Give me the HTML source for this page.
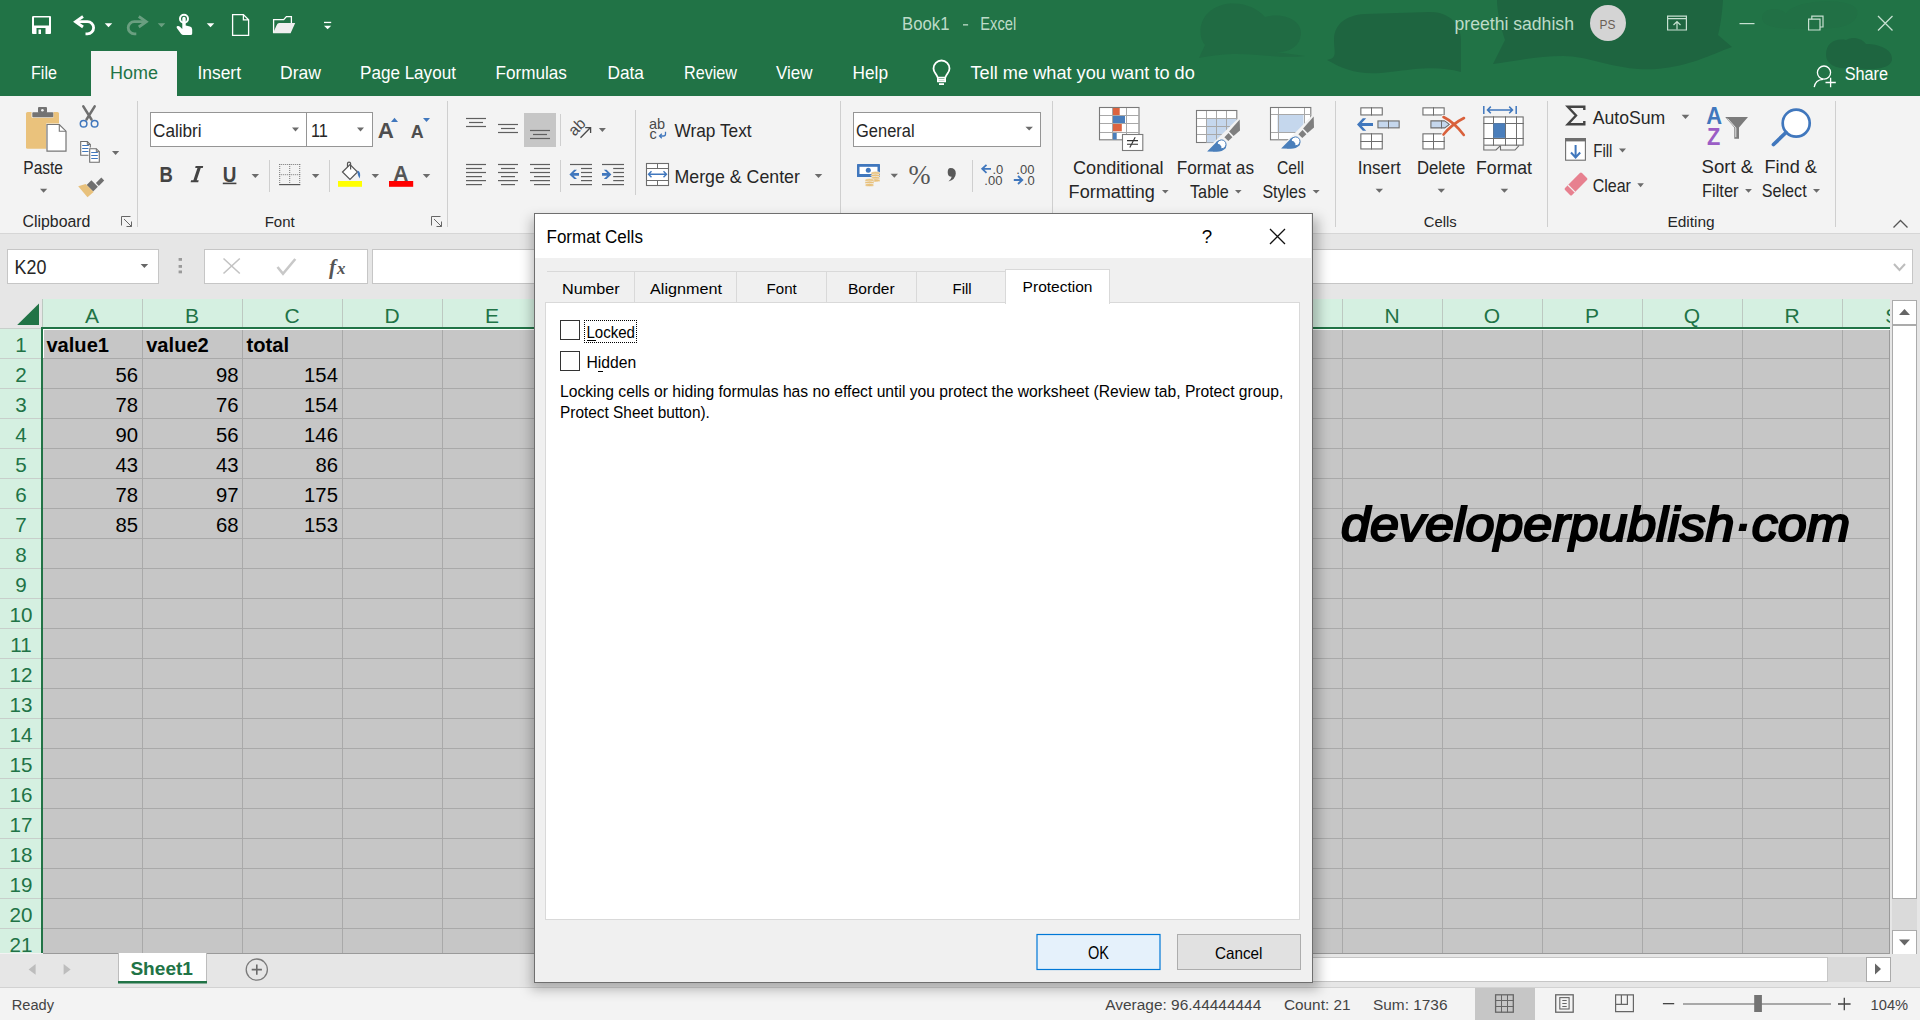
<!DOCTYPE html>
<html><head><meta charset="utf-8"><title>Excel</title>
<style>html,body{margin:0;padding:0;width:1920px;height:1020px;overflow:hidden;background:#f3f3f3}
svg{display:block;font-family:"Liberation Sans",sans-serif}</style></head>
<body><svg width="1920" height="1020" viewBox="0 0 1920 1020">
<rect x="0" y="0" width="1920" height="96" fill="#217346" />
<path d="M1199 58 L1205 45 C1197 36 1198 12 1222 5 C1240 0 1258 8 1265 17 C1283 12 1302 20 1301 34 C1300 47 1288 53 1276 52 L1305 56 C1270 60 1245 48 1199 58 Z" fill="#206b43" />
<path d="M1327 60 C1338 58 1334 52 1334 40 C1334 25 1345 15 1365 14 L1430 12 C1450 12 1461 25 1461 40 L1461 72 C1440 66 1420 68 1390 72 C1360 76 1345 70 1327 60 Z" fill="#1e6540" />
<path d="M1493 64 L1505 40 C1500 25 1497 10 1497 0 H1723 C1722 15 1720 28 1718 35 L1732 47 C1710 55 1690 66 1657 69 C1620 72 1590 56 1563 56 C1535 56 1510 62 1493 64 Z" fill="#1e6540" />
<path d="M1826 55 C1826 42 1836 38 1846 40 C1852 36 1862 38 1866 44 C1880 44 1893 50 1892 60 C1890 70 1870 70 1855 68 C1840 70 1826 66 1826 55 Z" fill="#1e6540" />
<path d="M1762 18 C1762 8 1780 6 1786 14 C1792 0 1850 -4 1857 10 C1860 24 1840 30 1815 28 C1795 30 1762 30 1762 18 Z" fill="#217045" />
<rect x="91" y="51" width="86" height="45" fill="#f3f3f3" />
<path d="M33.5 16 H50 Q51 16 51 17 V33 Q51 34 50 34 H33 Q32 34 32 33 V17 Q32 16 33.5 16 Z" fill="#ffffff" />
<rect x="34" y="17.5" width="15" height="8" fill="#217346" />
<rect x="36.5" y="28" width="9" height="6" fill="#217346" />
<rect x="38.5" y="29.5" width="2.5" height="4.5" fill="#ffffff" />
<path d="M83 16.5 L75.5 21.7 L83 27" fill="none" stroke="#ffffff" stroke-width="2.8" stroke-linejoin="miter" stroke-linecap="butt"/>
<path d="M76 21.7 H87.5 A6.1 6.1 0 0 1 87.5 33.9 H85.5" fill="none" stroke="#ffffff" stroke-width="2.8" />
<path d="M104.75 23.2h7.5l-3.75 4z" fill="#ffffff"/>
<path d="M138.8 16.5 L146.3 21.7 L138.8 27" fill="none" stroke="#6a9f80" stroke-width="2.8" />
<path d="M145.8 21.7 H134.3 A6.1 6.1 0 0 0 134.3 33.9 H136.3" fill="none" stroke="#6a9f80" stroke-width="2.8" />
<path d="M157.75 23.2h7.5l-3.75 4z" fill="#6a9f80"/>
<circle cx="184" cy="18.8" r="4" fill="none" stroke="#ffffff" stroke-width="2"/>
<path d="M182.3 18.5 Q182.3 16.8 184 16.8 Q185.7 16.8 185.7 18.5 V25.5 L190 26.5 Q192.2 27 192.2 29.5 V33.5 Q192.2 35 190.5 35 H183.5 Q182 35 181 33.8 L176.8 28 Q176 26.5 177.5 26 Q178.8 25.6 180 26.8 L182.3 29 Z" fill="#ffffff" />
<path d="M206.75 23.2h7.5l-3.75 4z" fill="#ffffff"/>
<path d="M232.6 14.6 H243.4 L248.6 19.8 V35.4 H232.6 Z M243.4 14.6 V19.8 H248.6" fill="none" stroke="#ffffff" stroke-width="1.3" />
<path d="M273.6 33 V19.6 H283.7 L286.4 16.6 H291.4 V23.5" fill="none" stroke="#ffffff" stroke-width="1.3" />
<path d="M279 23 H295.2 L290.6 33.2 H273 L276.5 25.5 Q277.2 23 279 23 Z" fill="#efefef" />
<rect x="324" y="21.8" width="7.2" height="1.3" fill="#ffffff" />
<path d="M324 25.8 H331.2 L327.6 29.3 Z" fill="#ffffff" />
<text transform="translate(31 79.3) scale(0.8825 1)" x="-0.0" y="0" font-size="18.3" fill="#ffffff" >File</text>
<text transform="translate(197.5 79.3) scale(0.9508 1)" x="-0.0" y="0" font-size="18.3" fill="#ffffff" >Insert</text>
<text transform="translate(280 79.3) scale(0.9595 1)" x="-0.0" y="0" font-size="18.3" fill="#ffffff" >Draw</text>
<text transform="translate(360 79.3) scale(0.9343 1)" x="-0.0" y="0" font-size="18.3" fill="#ffffff" >Page Layout</text>
<text transform="translate(495.5 79.3) scale(0.937 1)" x="-0.0" y="0" font-size="18.3" fill="#ffffff" >Formulas</text>
<text transform="translate(607.5 79.3) scale(0.943 1)" x="-0.0" y="0" font-size="18.3" fill="#ffffff" >Data</text>
<text transform="translate(684 79.3) scale(0.883 1)" x="-0.0" y="0" font-size="18.3" fill="#ffffff" >Review</text>
<text transform="translate(776 79.3) scale(0.9277 1)" x="-0.0" y="0" font-size="18.3" fill="#ffffff" >View</text>
<text transform="translate(852.5 79.3) scale(0.944 1)" x="-0.0" y="0" font-size="18.3" fill="#ffffff" >Help</text>
<text transform="translate(110 79.3) scale(0.9824 1)" x="-0.0" y="0" font-size="18.3" fill="#217346" >Home</text>
<path d="M937.7 77.6 C936.5 73.5 933.5 72.5 933.5 68.5 A8 8 0 1 1 949.5 68.5 C949.5 72.5 946.5 73.5 945.3 77.6 Z" fill="none" stroke="#ffffff" stroke-width="1.8" />
<path d="M937.8 77.6 V81.5 H945.2 V77.6 M938 79.8 H945" fill="none" stroke="#ffffff" stroke-width="1.6" />
<rect x="939" y="83.2" width="5" height="1.8" fill="#ffffff" />
<text transform="translate(970.5 79.3) scale(0.9941 1)" x="-0.0" y="0" font-size="18.3" fill="#ffffff" >Tell me what you want to do</text>
<text transform="translate(902.1 30) scale(0.9289 1)" x="-0.0" y="0" font-size="18" fill="#bddbc8" >Book1</text>
<rect x="963" y="24.2" width="5.1" height="1.3" fill="#bddbc8" />
<text transform="translate(980.3 30) scale(0.8157 1)" x="-0.0" y="0" font-size="18" fill="#bddbc8" >Excel</text>
<text transform="translate(1454.5 30) scale(0.9792 1)" x="-0.0" y="0" font-size="18" fill="#bddbc8" >preethi sadhish</text>
<circle cx="1608" cy="23" r="18" fill="#d4d4d4"/>
<text x="1599.5" y="28.8" font-size="11.91" fill="#6a5e55" >PS</text>
<path d="M1667.6 16.2 H1686.4 V30 H1667.6 Z M1667.6 18.6 H1686.4" fill="none" stroke="#c7e0d1" stroke-width="1.2" />
<path d="M1677 29.5 V21.5 M1673.5 25 L1677 21.5 L1680.5 25" fill="none" stroke="#c7e0d1" stroke-width="1.2" />
<rect x="1739.5" y="23" width="15" height="1.2" fill="#c7e0d1" />
<path d="M1808.6 19.2 H1820 V30 H1808.6 Z" fill="none" stroke="#c7e0d1" stroke-width="1.2" />
<path d="M1811.8 19.2 V16.2 H1823 V27 H1820" fill="none" stroke="#c7e0d1" stroke-width="1.2" />
<path d="M1878 16 L1892.5 30.5 M1892.5 16 L1878 30.5" fill="none" stroke="#c7e0d1" stroke-width="1.3" />
<circle cx="1824" cy="72.6" r="6.6" fill="none" stroke="#ffffff" stroke-width="1.3"/>
<path d="M1814.2 87.2 C1815 82 1818.5 79.5 1823 79.3" fill="none" stroke="#ffffff" stroke-width="1.3" />
<path d="M1830.6 77.8 V87.2 M1825.5 82.5 H1835.8" fill="none" stroke="#ffffff" stroke-width="1.3" />
<text transform="translate(1844.7 79.7) scale(0.8882 1)" x="-0.0" y="0" font-size="18.3" fill="#ffffff" >Share</text>
<rect x="0" y="96" width="1920" height="137" fill="#f3f3f3" />
<rect x="0" y="233" width="1920" height="1" fill="#d6d6d6"/>
<rect x="137" y="101" width="1" height="126" fill="#cfcfcf"/>
<rect x="447" y="101" width="1" height="126" fill="#cfcfcf"/>
<rect x="840" y="101" width="1" height="126" fill="#cfcfcf"/>
<rect x="1052" y="101" width="1" height="126" fill="#cfcfcf"/>
<rect x="1335" y="101" width="1" height="126" fill="#cfcfcf"/>
<rect x="1547" y="101" width="1" height="126" fill="#cfcfcf"/>
<rect x="1835" y="101" width="1" height="126" fill="#cfcfcf"/>
<text x="22.5" y="226.8" font-size="15.89" fill="#262626" >Clipboard</text>
<text x="264.7" y="226.8" font-size="15.0" fill="#262626" >Font</text>
<text x="1423.7" y="226.8" font-size="14.83" fill="#262626" >Cells</text>
<text x="1667.4" y="226.8" font-size="15.49" fill="#262626" >Editing</text>
<path d="M121.5 225.5 V216.5 H130.5" fill="none" stroke="#666" stroke-width="1" />
<path d="M124 219 L131.5 226.5 M131.5 221.5 V226.5 H126.5" fill="none" stroke="#666" stroke-width="1" />
<path d="M431.5 225.5 V216.5 H440.5" fill="none" stroke="#666" stroke-width="1" />
<path d="M434 219 L441.5 226.5 M441.5 221.5 V226.5 H436.5" fill="none" stroke="#666" stroke-width="1" />
<path d="M27.5 112 H57.5 Q59 112 59 113.5 V147.3 Q59 148.8 57.5 148.8 H27.5 Q26 148.8 26 147.3 V113.5 Q26 112 27.5 112 Z" fill="#eac27c" />
<rect x="31.5" y="111.8" width="22" height="6" fill="#f3f3f3" rx="1"/>
<rect x="32.3" y="112.3" width="21" height="5" fill="#737373" rx="0.8"/>
<rect x="38" y="107" width="9" height="6" fill="#737373" rx="1"/>
<circle cx="42.4" cy="110.3" r="1.3" fill="#f3f3f3"/>
<path d="M46.2 123.5 H59.3 L66.6 130.8 V152 H46.2 Z" fill="#f3f3f3" />
<path d="M47 124.5 H59.3 L66 131.2 V151.2 H47 Z" fill="#ffffff" stroke="#767676" stroke-width="1.2" />
<path d="M59.3 124.5 V131.2 H66" fill="none" stroke="#767676" stroke-width="1.1" />
<text transform="translate(23.3 173.7) scale(0.8681 1)" x="-0.0" y="0" font-size="17.9" fill="#262626" >Paste</text>
<path d="M40.0 188.8h7.2l-3.6 4z" fill="#6b6b6b"/>
<path d="M83.3 106.4 L91.5 119.5 M94.7 106.4 L86.5 119.5" fill="none" stroke="#6f6f6f" stroke-width="2.5" stroke-linecap="round"/>
<circle cx="83.6" cy="123.8" r="3.3" fill="none" stroke="#4077bd" stroke-width="1.5"/>
<circle cx="94.6" cy="123.8" r="3.3" fill="none" stroke="#4077bd" stroke-width="1.5"/>
<path d="M80.7 141.5 H87.3 L90.3 144.5 V155.3 H80.7 Z" fill="#fff" stroke="#6e6e6e" stroke-width="1.1" />
<path d="M87.3 141.5 V144.5 H90.3" fill="none" stroke="#6e6e6e" stroke-width="1" />
<rect x="82.2" y="145" width="6.599999999999994" height="1" fill="#4077bd"/>
<rect x="82.2" y="148" width="6.599999999999994" height="1" fill="#4077bd"/>
<rect x="82.2" y="151" width="6.599999999999994" height="1" fill="#4077bd"/>
<rect x="88.5" y="147.5" width="12" height="16" fill="#f3f3f3" />
<path d="M89.7 148.7 H96.3 L99.3 151.7 V162.3 H89.7 Z" fill="#fff" stroke="#6e6e6e" stroke-width="1.1" />
<path d="M96.3 148.7 V151.7 H99.3" fill="none" stroke="#6e6e6e" stroke-width="1" />
<rect x="91.2" y="152" width="6.599999999999994" height="1" fill="#4077bd"/>
<rect x="91.2" y="155" width="6.599999999999994" height="1" fill="#4077bd"/>
<rect x="91.2" y="158" width="6.599999999999994" height="1" fill="#4077bd"/>
<path d="M112.0 151h7.2l-3.6 4z" fill="#6b6b6b"/>
<path d="M101.3 177.6 L104.2 180.5 L98.8 185.9 L95.9 183 Z" fill="#6f6f6f" />
<path d="M93.1 191.5 L86.6 185 L91.4 180.2 L97.9 186.7 Z" fill="#6f6f6f" />
<path d="M78.2 186.3 L85.6 183.9 L93.6 191.9 L87.5 197.2 Z" fill="#e8c17c" />
<rect x="150.5" y="112.5" width="222" height="34" fill="#fff" stroke="#959595" stroke-width="1"/>
<rect x="306" y="112" width="1" height="34" fill="#959595"/>
<text transform="translate(153 137) scale(0.9597 1)" x="-0.0" y="0" font-size="17.9" fill="#262626" >Calibri</text>
<path d="M292.0 127.5h7l-3.5 4z" fill="#6b6b6b"/>
<text transform="translate(311 137) scale(0.9132 1)" x="-0.0" y="0" font-size="17.9" fill="#262626" >11</text>
<path d="M357.0 127.5h7l-3.5 4z" fill="#6b6b6b"/>
<text transform="translate(377.8 137.7) scale(0.9938 1)" x="-0.0" y="0" font-size="22.5" fill="#4e4e4e" font-weight="bold" >A</text>
<path d="M391 121.9 L394.5 117.7 L398 121.9 Z" fill="#4077bd" />
<text transform="translate(410.8 137.7) scale(0.953 1)" x="-0.0" y="0" font-size="18.8" fill="#4e4e4e" font-weight="bold" >A</text>
<path d="M423 118 H430 L426.5 122 Z" fill="#4077bd" />
<text transform="translate(159.4 182.2) scale(0.821 1)" x="-0.0" y="0" font-size="22.5" fill="#434343" font-weight="bold" >B</text>
<path d="M195.6 165.9 H203.2 L202.8 167.9 H195.2 Z M197.6 167.5 H200.9 L196.6 180.6 H193.3 Z M191.1 180.3 H198.7 L198.2 182.3 H190.6 Z" fill="#434343" />
<text transform="translate(222.8 181.9) scale(0.8786 1)" x="-0.0" y="0" font-size="21.5" fill="#434343" font-weight="bold" >U</text>
<rect x="222.8" y="182.6" width="13.6" height="1.6" fill="#434343" />
<path d="M251.55 174h7.5l-3.75 4z" fill="#6b6b6b"/>
<rect x="269" y="160" width="1" height="32" fill="#cfcfcf"/>
<g fill="#777">
<rect x="279.2" y="164" width="1" height="1" fill="#777" />
<rect x="279.2" y="174.2" width="1" height="1" fill="#777" />
<rect x="279.2" y="164" width="1" height="1" fill="#777" />
<rect x="289.2" y="164" width="1" height="1" fill="#777" />
<rect x="299.2" y="164" width="1" height="1" fill="#777" />
<rect x="281.2" y="164" width="1" height="1" fill="#777" />
<rect x="281.2" y="174.2" width="1" height="1" fill="#777" />
<rect x="279.2" y="166" width="1" height="1" fill="#777" />
<rect x="289.2" y="166" width="1" height="1" fill="#777" />
<rect x="299.2" y="166" width="1" height="1" fill="#777" />
<rect x="283.2" y="164" width="1" height="1" fill="#777" />
<rect x="283.2" y="174.2" width="1" height="1" fill="#777" />
<rect x="279.2" y="168" width="1" height="1" fill="#777" />
<rect x="289.2" y="168" width="1" height="1" fill="#777" />
<rect x="299.2" y="168" width="1" height="1" fill="#777" />
<rect x="285.2" y="164" width="1" height="1" fill="#777" />
<rect x="285.2" y="174.2" width="1" height="1" fill="#777" />
<rect x="279.2" y="170" width="1" height="1" fill="#777" />
<rect x="289.2" y="170" width="1" height="1" fill="#777" />
<rect x="299.2" y="170" width="1" height="1" fill="#777" />
<rect x="287.2" y="164" width="1" height="1" fill="#777" />
<rect x="287.2" y="174.2" width="1" height="1" fill="#777" />
<rect x="279.2" y="172" width="1" height="1" fill="#777" />
<rect x="289.2" y="172" width="1" height="1" fill="#777" />
<rect x="299.2" y="172" width="1" height="1" fill="#777" />
<rect x="289.2" y="164" width="1" height="1" fill="#777" />
<rect x="289.2" y="174.2" width="1" height="1" fill="#777" />
<rect x="279.2" y="174" width="1" height="1" fill="#777" />
<rect x="289.2" y="174" width="1" height="1" fill="#777" />
<rect x="299.2" y="174" width="1" height="1" fill="#777" />
<rect x="291.2" y="164" width="1" height="1" fill="#777" />
<rect x="291.2" y="174.2" width="1" height="1" fill="#777" />
<rect x="279.2" y="176" width="1" height="1" fill="#777" />
<rect x="289.2" y="176" width="1" height="1" fill="#777" />
<rect x="299.2" y="176" width="1" height="1" fill="#777" />
<rect x="293.2" y="164" width="1" height="1" fill="#777" />
<rect x="293.2" y="174.2" width="1" height="1" fill="#777" />
<rect x="279.2" y="178" width="1" height="1" fill="#777" />
<rect x="289.2" y="178" width="1" height="1" fill="#777" />
<rect x="299.2" y="178" width="1" height="1" fill="#777" />
<rect x="295.2" y="164" width="1" height="1" fill="#777" />
<rect x="295.2" y="174.2" width="1" height="1" fill="#777" />
<rect x="279.2" y="180" width="1" height="1" fill="#777" />
<rect x="289.2" y="180" width="1" height="1" fill="#777" />
<rect x="299.2" y="180" width="1" height="1" fill="#777" />
<rect x="297.2" y="164" width="1" height="1" fill="#777" />
<rect x="297.2" y="174.2" width="1" height="1" fill="#777" />
<rect x="279.2" y="182" width="1" height="1" fill="#777" />
<rect x="289.2" y="182" width="1" height="1" fill="#777" />
<rect x="299.2" y="182" width="1" height="1" fill="#777" />
<rect x="299.2" y="164" width="1" height="1" fill="#777" />
<rect x="299.2" y="174.2" width="1" height="1" fill="#777" />
<rect x="279.2" y="184" width="1" height="1" fill="#777" />
<rect x="289.2" y="184" width="1" height="1" fill="#777" />
<rect x="299.2" y="184" width="1" height="1" fill="#777" />
</g>
<rect x="279.2" y="184" width="21" height="1.2" fill="#555" />
<path d="M311.85 174h7.5l-3.75 4z" fill="#6b6b6b"/>
<rect x="329" y="160" width="1" height="32" fill="#cfcfcf"/>
<path d="M342.5 172 L350 164.5 L357.5 172 L350 179.5 Z" fill="#fff" stroke="#555" stroke-width="1.2" />
<path d="M347.5 167 V163.5 Q347.5 162.2 349 162.2 Q350.6 162.2 350.6 163.5 V169.5" fill="none" stroke="#555" stroke-width="1.2" />
<path d="M357.5 170.5 Q361.5 172 359.5 178.5 Q357.5 175 357.5 172.5 Z" fill="#4077bd" />
<rect x="338" y="181" width="24" height="5.8" fill="#ffff00" />
<path d="M371.55 174h7.5l-3.75 4z" fill="#6b6b6b"/>
<text transform="translate(393.2 181) scale(0.9576 1)" x="-0.0" y="0" font-size="21.9" fill="#555555" font-weight="bold" >A</text>
<rect x="389" y="181" width="24.2" height="5.8" fill="#ff0000" />
<path d="M422.75 174h7.5l-3.75 4z" fill="#6b6b6b"/>
<rect x="466" y="117.9" width="20" height="1.2" fill="#5f5f5f" />
<rect x="469" y="121.9" width="14" height="1.2" fill="#5f5f5f" />
<rect x="466" y="125.9" width="20" height="1.2" fill="#5f5f5f" />
<rect x="498" y="123.9" width="20" height="1.2" fill="#5f5f5f" />
<rect x="501" y="127.9" width="14" height="1.2" fill="#5f5f5f" />
<rect x="498" y="131.9" width="20" height="1.2" fill="#5f5f5f" />
<rect x="524" y="113" width="32" height="34" fill="#c6c6c6" />
<rect x="530" y="129.9" width="20" height="1.2" fill="#5f5f5f" />
<rect x="533" y="133.9" width="14" height="1.2" fill="#5f5f5f" />
<rect x="530" y="137.9" width="20" height="1.2" fill="#5f5f5f" />
<rect x="560" y="114" width="1" height="32" fill="#cfcfcf"/>
<g transform="rotate(-45 578 128)"><text x="569.3" y="131.6" font-size="15.5" fill="#4a4a4a">ab</text></g>
<path d="M580.5 137.8 L590.5 127.5 M585.2 127.7 H590.6 V133.1" fill="none" stroke="#4a4a4a" stroke-width="1.3" />
<path d="M598.9 128h7l-3.5 4z" fill="#6b6b6b"/>
<rect x="466" y="163.9" width="20" height="1.2" fill="#5f5f5f" />
<rect x="466" y="167.9" width="16" height="1.2" fill="#5f5f5f" />
<rect x="466" y="171.9" width="20" height="1.2" fill="#5f5f5f" />
<rect x="466" y="176.0" width="16" height="1.2" fill="#5f5f5f" />
<rect x="466" y="180.0" width="20" height="1.2" fill="#5f5f5f" />
<rect x="466" y="184.0" width="16" height="1.2" fill="#5f5f5f" />
<rect x="498" y="163.9" width="20" height="1.2" fill="#5f5f5f" />
<rect x="501" y="167.9" width="14" height="1.2" fill="#5f5f5f" />
<rect x="498" y="171.9" width="20" height="1.2" fill="#5f5f5f" />
<rect x="501" y="176.0" width="14" height="1.2" fill="#5f5f5f" />
<rect x="498" y="180.0" width="20" height="1.2" fill="#5f5f5f" />
<rect x="501" y="184.0" width="14" height="1.2" fill="#5f5f5f" />
<rect x="530" y="163.9" width="20" height="1.2" fill="#5f5f5f" />
<rect x="534" y="167.9" width="16" height="1.2" fill="#5f5f5f" />
<rect x="530" y="171.9" width="20" height="1.2" fill="#5f5f5f" />
<rect x="534" y="176.0" width="16" height="1.2" fill="#5f5f5f" />
<rect x="530" y="180.0" width="20" height="1.2" fill="#5f5f5f" />
<rect x="534" y="184.0" width="16" height="1.2" fill="#5f5f5f" />
<rect x="560" y="160" width="1" height="32" fill="#cfcfcf"/>
<rect x="570" y="163.9" width="22" height="1.2" fill="#5f5f5f" />
<rect x="602" y="163.9" width="22" height="1.2" fill="#5f5f5f" />
<rect x="570" y="184.0" width="22" height="1.2" fill="#5f5f5f" />
<rect x="602" y="184.0" width="22" height="1.2" fill="#5f5f5f" />
<rect x="581" y="167.9" width="11" height="1.2" fill="#5f5f5f" />
<rect x="613.2" y="167.9" width="10.8" height="1.2" fill="#5f5f5f" />
<rect x="581" y="171.9" width="11" height="1.2" fill="#5f5f5f" />
<rect x="613.2" y="171.9" width="10.8" height="1.2" fill="#5f5f5f" />
<rect x="581" y="176.0" width="11" height="1.2" fill="#5f5f5f" />
<rect x="613.2" y="176.0" width="10.8" height="1.2" fill="#5f5f5f" />
<rect x="581" y="180.0" width="11" height="1.2" fill="#5f5f5f" />
<rect x="613.2" y="180.0" width="10.8" height="1.2" fill="#5f5f5f" />
<path d="M569.4 174.4 L574.2 169.7 H577 L573.6 173 H579 V175.8 H573.6 L577 179.1 H574.2 Z" fill="#4077bd" />
<path d="M611.4 174.4 L606.6 169.7 H603.8 L607.2 173 H602 V175.8 H607.2 L603.8 179.1 H606.6 Z" fill="#4077bd" />
<rect x="635" y="110" width="1" height="85" fill="#cfcfcf"/>
<text x="649" y="128.5" font-size="14.5" fill="#4a4a4a">ab</text>
<text x="649.5" y="138.7" font-size="14.5" fill="#4a4a4a">c</text>
<path d="M665.5 131.8 V134 Q665.5 136 663.5 136 H659.8 M661.8 133.8 L659.5 136 L661.8 138.2" fill="none" stroke="#4077bd" stroke-width="1.3" />
<text transform="translate(674.5 137) scale(0.9659 1)" x="-0.0" y="0" font-size="17.9" fill="#262626" >Wrap Text</text>
<rect x="646.5" y="163.5" width="22" height="22" fill="#fff" stroke="#6d6d6d" stroke-width="1.1" />
<rect x="646" y="168" width="23" height="1" fill="#6d6d6d"/>
<rect x="646" y="180" width="23" height="1" fill="#6d6d6d"/>
<rect x="657" y="163" width="1" height="5.5" fill="#6d6d6d"/>
<rect x="657" y="180.5" width="1" height="5.5" fill="#6d6d6d"/>
<path d="M648.5 174.3 H666.5 M651.5 171.3 L648.5 174.3 L651.5 177.3 M663.5 171.3 L666.5 174.3 L663.5 177.3" fill="none" stroke="#4077bd" stroke-width="1.4" />
<text transform="translate(674.5 183) scale(0.9931 1)" x="-0.0" y="0" font-size="17.9" fill="#262626" >Merge &amp; Center</text>
<path d="M814.75 174h7.5l-3.75 4z" fill="#6b6b6b"/>
<rect x="853.5" y="112.5" width="187" height="34" fill="#fff" stroke="#959595" stroke-width="1"/>
<text transform="translate(856 136.7) scale(0.9212 1)" x="-0.0" y="0" font-size="17.9" fill="#262626" >General</text>
<path d="M1025.45 126.8h7.5l-3.75 3.8z" fill="#6b6b6b"/>
<rect x="857" y="164" width="23" height="13" fill="#4077bd" rx="0.5"/>
<path d="M859.5 166.8 H877.5 V174 H859.5 Z" fill="#fff" />
<circle cx="868.3" cy="170.2" r="2.5" fill="#4077bd"/>
<ellipse cx="875.5" cy="173.2" rx="4.6" ry="1.6" fill="#e8c17c" stroke="#f3f3f3" stroke-width="0.6"/>
<ellipse cx="875.5" cy="175.6" rx="4.6" ry="1.6" fill="#e8c17c" stroke="#f3f3f3" stroke-width="0.6"/>
<ellipse cx="875.5" cy="178.0" rx="4.6" ry="1.6" fill="#e8c17c" stroke="#f3f3f3" stroke-width="0.6"/>
<ellipse cx="875.5" cy="180.39999999999998" rx="4.6" ry="1.6" fill="#e8c17c" stroke="#f3f3f3" stroke-width="0.6"/>
<ellipse cx="869.5" cy="180.2" rx="4.6" ry="1.6" fill="#e8c17c" stroke="#f3f3f3" stroke-width="0.6"/>
<ellipse cx="869.5" cy="182.6" rx="4.6" ry="1.6" fill="#e8c17c" stroke="#f3f3f3" stroke-width="0.6"/>
<ellipse cx="869.5" cy="185.0" rx="4.6" ry="1.6" fill="#e8c17c" stroke="#f3f3f3" stroke-width="0.6"/>
<path d="M890.5999999999999 173.8h7.4l-3.7 4z" fill="#6b6b6b"/>
<text x="908.6" y="184" font-size="26.5" fill="#555" font-family="Liberation Serif">%</text>
<path d="M950.5 168 Q955.8 168 955.8 173.5 Q955.5 179.5 948.5 181.5 Q951.5 178.5 951.7 176.8 Q947.7 176.8 947.7 172.3 Q947.7 168 950.5 168 Z" fill="#595959" />
<rect x="972" y="160" width="1" height="32" fill="#cfcfcf"/>
<text x="992.5" y="174" font-size="13" fill="#4a4a4a">.0</text>
<text x="984.3" y="185" font-size="13" fill="#4a4a4a">.00</text>
<path d="M986.5 164.8 L982.2 168.8 L986.5 172.8 M982.5 168.8 H991" fill="none" stroke="#4077bd" stroke-width="1.8" />
<text x="1016.3" y="174" font-size="13" fill="#4a4a4a">.00</text>
<text x="1024" y="185" font-size="13" fill="#4a4a4a">.0</text>
<path d="M1018 176 L1022.3 180 L1018 184 M1022 180 H1013.8" fill="none" stroke="#4077bd" stroke-width="1.8" />
<rect x="1099.5" y="107.5" width="39.5" height="32.3" fill="#fff" stroke="#7a7a7a" stroke-width="1.1" />
<rect x="1112" y="108" width="7.7" height="7.3" fill="#dc6440" />
<rect x="1112" y="115.8" width="13" height="7.3" fill="#4a7ebb" />
<rect x="1112" y="123.8" width="9.8" height="7.5" fill="#dc6440" />
<rect x="1112" y="131.9" width="4.7" height="7.6" fill="#4a7ebb" />
<rect x="1100" y="115" width="39" height="1" fill="#a8a8a8"/>
<rect x="1100" y="123" width="39" height="1" fill="#a8a8a8"/>
<rect x="1100" y="132" width="39" height="1" fill="#a8a8a8"/>
<rect x="1112" y="108" width="1" height="31.5" fill="#a8a8a8"/>
<rect x="1126" y="108" width="1" height="31.5" fill="#a8a8a8"/>
<rect x="1122.5" y="134.5" width="20.3" height="16" fill="#fff" stroke="#7a7a7a" stroke-width="1.1" />
<path d="M1127 140.6 H1138 M1127 144.2 H1138 M1135.2 137.2 L1129.8 147.6" fill="none" stroke="#333" stroke-width="1.1" />
<rect x="1196.5" y="110.5" width="40.3" height="32" fill="#fff" stroke="#7a7a7a" stroke-width="1.1" />
<rect x="1206.5" y="118.5" width="30" height="24" fill="#c5d7ed" />
<rect x="1197" y="118" width="40" height="1" fill="#a8a8a8"/>
<rect x="1197" y="126" width="40" height="1" fill="#a8a8a8"/>
<rect x="1197" y="134" width="40" height="1" fill="#a8a8a8"/>
<rect x="1206" y="111" width="1" height="31.5" fill="#a8a8a8"/>
<rect x="1216" y="111" width="1" height="31.5" fill="#a8a8a8"/>
<rect x="1226" y="111" width="1" height="31.5" fill="#a8a8a8"/>
<g transform="translate(0 0)">
<path d="M1237.6 119 L1245 119 L1245 146 L1212 146 L1212.8 143.3 Z" fill="#f3f3f3" />
<path d="M1239.7 119.5 L1240 130.6 L1233.6 135.9 L1229.1 131.6 Z" fill="#f3f3f3" stroke="#f3f3f3" stroke-width="2.2" />
<path d="M1228.5 132.9 L1232.4 137.2 L1228.3 140.9 L1224.4 137.2 Z" fill="#f3f3f3" stroke="#f3f3f3" stroke-width="2.2" />
<path d="M1207.1 151.5 L1215.5 143.1 A5.7 5.7 0 1 1 1225.7 148.3 Q1222 151.8 1217 151.8 Z" fill="#f3f3f3" stroke="#f3f3f3" stroke-width="2.2" />
<path d="M1239.7 119.5 L1240 130.6 L1233.6 135.9 L1229.1 131.6 Z" fill="#7f7f7f" />
<path d="M1228.5 132.9 L1232.4 137.2 L1228.3 140.9 L1224.4 137.2 Z" fill="#7f7f7f" />
<path d="M1207.1 151.5 L1215.5 143.1 A5.7 5.7 0 1 1 1225.7 148.3 Q1222 151.8 1217 151.8 Z" fill="#4a7fbb" />
<circle cx="1221.6" cy="144.3" r="4.4" fill="#fff" stroke="#4a7fbb" stroke-width="1"/>
<path d="M1215.8 144.2 Q1219.8 142.6 1221.3 146.6 L1221.6 149.8 Q1218 151.5 1213 151.5 Z" fill="#4a7fbb"/>
</g>
<rect x="1270.5" y="107.5" width="40.3" height="32.3" fill="#fff" stroke="#7a7a7a" stroke-width="1.1" />
<rect x="1277.5" y="114.5" width="26" height="18" fill="#c5d7ed" />
<rect x="1271" y="114" width="40" height="1" fill="#a8a8a8"/>
<rect x="1271" y="132" width="40" height="1" fill="#a8a8a8"/>
<rect x="1278" y="108" width="1" height="31.5" fill="#a8a8a8"/>
<rect x="1304" y="108" width="1" height="31.5" fill="#a8a8a8"/>
<g transform="translate(74 -3)">
<path d="M1237.6 119 L1245 119 L1245 146 L1212 146 L1213.8 143.3 Z" fill="#f3f3f3" />
<path d="M1239.7 119.5 L1240 130.6 L1233.6 135.9 L1229.1 131.6 Z" fill="#f3f3f3" stroke="#f3f3f3" stroke-width="2.2" />
<path d="M1228.5 132.9 L1232.4 137.2 L1228.3 140.9 L1224.4 137.2 Z" fill="#f3f3f3" stroke="#f3f3f3" stroke-width="2.2" />
<path d="M1207.1 151.5 L1215.5 143.1 A5.7 5.7 0 1 1 1225.7 148.3 Q1222 151.8 1217 151.8 Z" fill="#f3f3f3" stroke="#f3f3f3" stroke-width="2.2" />
<path d="M1239.7 119.5 L1240 130.6 L1233.6 135.9 L1229.1 131.6 Z" fill="#7f7f7f" />
<path d="M1228.5 132.9 L1232.4 137.2 L1228.3 140.9 L1224.4 137.2 Z" fill="#7f7f7f" />
<path d="M1207.1 151.5 L1215.5 143.1 A5.7 5.7 0 1 1 1225.7 148.3 Q1222 151.8 1217 151.8 Z" fill="#4a7fbb" />
<circle cx="1221.6" cy="144.3" r="4.4" fill="#fff" stroke="#4a7fbb" stroke-width="1"/>
<path d="M1215.8 144.2 Q1219.8 142.6 1221.3 146.6 L1221.6 149.8 Q1218 151.5 1213 151.5 Z" fill="#4a7fbb"/>
</g>
<text transform="translate(1073 174) scale(1.0124 1)" x="-0.0" y="0" font-size="17.9" fill="#262626" >Conditional</text>
<text transform="translate(1068.6 198) scale(1.0098 1)" x="-0.0" y="0" font-size="17.9" fill="#262626" >Formatting</text>
<path d="M1162.0 190h6.6l-3.3 3.5z" fill="#6b6b6b"/>
<text transform="translate(1176.7 174) scale(0.9597 1)" x="-0.0" y="0" font-size="17.9" fill="#262626" >Format as</text>
<text transform="translate(1190 198) scale(0.9069 1)" x="-0.0" y="0" font-size="17.9" fill="#262626" >Table</text>
<path d="M1235.0 190h6.6l-3.3 3.5z" fill="#6b6b6b"/>
<text transform="translate(1277 174) scale(0.8744 1)" x="-0.0" y="0" font-size="17.9" fill="#262626" >Cell</text>
<text transform="translate(1262.4 198) scale(0.8939 1)" x="-0.0" y="0" font-size="17.9" fill="#262626" >Styles</text>
<path d="M1312.7 190h7l-3.5 3.5z" fill="#6b6b6b"/>
<rect x="1360.85" y="107.85" width="21.4" height="7.100000000000003" fill="#fff" stroke="#6e6e6e" stroke-width="1.1" />
<rect x="1371" y="107.3" width="1" height="8.200000000000003" fill="#6e6e6e"/>
<rect x="1377.95" y="120.95" width="21.199999999999953" height="6.9" fill="#c5d7ed" stroke="#6e6e6e" stroke-width="1.1" />
<rect x="1388" y="120.4" width="1" height="8.0" fill="#6e6e6e"/>
<path d="M1357 124.5 L1362.8 118.3 H1366.2 L1361.8 123.1 H1373 V125.9 H1361.8 L1366.2 130.7 H1362.8 Z" fill="#4077bd" />
<rect x="1360.85" y="133.85000000000002" width="21.4" height="15.099999999999989" fill="#fff" stroke="#6e6e6e" stroke-width="1.1" />
<rect x="1371" y="133.3" width="1" height="16.19999999999999" fill="#6e6e6e"/>
<rect x="1360.3" y="141" width="22.5" height="1" fill="#6e6e6e"/>
<text transform="translate(1357.7 174.3) scale(0.9609 1)" x="-0.0" y="0" font-size="17.9" fill="#262626" >Insert</text>
<path d="M1375.55 188.7h7.5l-3.75 4z" fill="#6b6b6b"/>
<rect x="1422.95" y="107.85" width="21.199999999999953" height="7.100000000000003" fill="#fff" stroke="#6e6e6e" stroke-width="1.1" />
<rect x="1433" y="107.3" width="1" height="8.200000000000003" fill="#6e6e6e"/>
<path d="M1430.9 120.9 H1444.8 L1449.3 124.4 L1444.8 127.9 H1430.9 Z" fill="#c5d7ed" stroke="#6e6e6e" stroke-width="1.1" />
<rect x="1441" y="120.4" width="1" height="8.0" fill="#6e6e6e"/>
<rect x="1422.95" y="133.85000000000002" width="21.199999999999953" height="15.099999999999989" fill="#fff" stroke="#6e6e6e" stroke-width="1.1" />
<rect x="1433" y="133.3" width="1" height="16.19999999999999" fill="#6e6e6e"/>
<rect x="1422.4" y="141" width="22.299999999999955" height="1" fill="#6e6e6e"/>
<rect x="1440" y="114" width="12" height="24" fill="#f3f3f3" opacity="0"/>
<path d="M1443.5 117 Q1454 122 1463.8 135 M1464 118 Q1452 124 1443.5 134.5" fill="none" stroke="#f3f3f3" stroke-width="4.5" stroke-linecap="round"/>
<path d="M1443.5 117 Q1454 122 1463.8 135 M1464 118 Q1452 124 1443.5 134.5" fill="none" stroke="#d9603b" stroke-width="2.6" stroke-linecap="round"/>
<text transform="translate(1417 174.3) scale(0.9317 1)" x="-0.0" y="0" font-size="17.9" fill="#262626" >Delete</text>
<path d="M1437.55 188.7h7.5l-3.75 4z" fill="#6b6b6b"/>
<path d="M1483.8 106.1 V113.9 M1516.2 106.1 V113.9 M1487.5 109.9 H1512.5 M1490.8 106.6 L1487.5 109.9 L1490.8 113.2 M1509.2 106.6 L1512.5 109.9 L1509.2 113.2" fill="none" stroke="#4077bd" stroke-width="1.5" />
<rect x="1483.85" y="116.95" width="39.30000000000009" height="28.19999999999998" fill="#fff" stroke="#6e6e6e" stroke-width="1.1" />
<rect x="1493" y="116.4" width="1" height="29.299999999999983" fill="#6e6e6e"/>
<rect x="1505" y="116.4" width="1" height="29.299999999999983" fill="#6e6e6e"/>
<rect x="1516" y="116.4" width="1" height="29.299999999999983" fill="#6e6e6e"/>
<rect x="1483.3" y="123" width="40.40000000000009" height="1" fill="#6e6e6e"/>
<rect x="1483.3" y="138" width="40.40000000000009" height="1" fill="#6e6e6e"/>
<rect x="1493.4" y="123.3" width="11.7" height="14.6" fill="#4a7ebb" />
<path d="M1483.8 145.6 V150 H1496 L1500 146 H1500.5 V150 H1515 L1519 145.6" fill="none" stroke="#6e6e6e" stroke-width="1.1" />
<text transform="translate(1476 174.3) scale(0.9885 1)" x="-0.0" y="0" font-size="17.9" fill="#262626" >Format</text>
<path d="M1500.65 188.7h7.5l-3.75 4z" fill="#6b6b6b"/>
<path d="M1584.3 110 V106.8 H1567.8 L1576 115.5 L1567.8 124.2 H1584.3 V121" fill="none" stroke="#444" stroke-width="2.4" stroke-linejoin="miter"/>
<text transform="translate(1592.7 123.9) scale(0.987 1)" x="-0.0" y="0" font-size="17.9" fill="#262626" >AutoSum</text>
<path d="M1681.65 114.8h7.7l-3.85 4.2z" fill="#6b6b6b"/>
<rect x="1565.6" y="138.6" width="19.8" height="21.6" fill="#fff" stroke="#6e6e6e" stroke-width="1.1" />
<rect x="1565" y="138" width="21" height="3.4" fill="#6e6e6e" />
<path d="M1575.6 145 V157 M1571 152.5 L1575.6 157.5 L1580.2 152.5" fill="none" stroke="#4077bd" stroke-width="2" />
<text transform="translate(1593.2 157.4) scale(0.8413 1)" x="-0.0" y="0" font-size="17.9" fill="#262626" >Fill</text>
<path d="M1619.0 148.5h7l-3.5 4z" fill="#6b6b6b"/>
<g transform="rotate(-45 1576 184)">
<rect x="1564" y="179" width="24" height="10" fill="#e7808f" rx="1.5"/>
<rect x="1569" y="179" width="1.2" height="10" fill="#f3f3f3" />
</g>
<text transform="translate(1592.7 191.7) scale(0.8953 1)" x="-0.0" y="0" font-size="17.9" fill="#262626" >Clear</text>
<path d="M1637.3 183.3h6.6l-3.3 4z" fill="#6b6b6b"/>
<text transform="translate(1706.2 123.9) scale(0.9338 1)" x="-0.0" y="0" font-size="23.5" fill="#4077bd" font-weight="bold" >A</text>
<text transform="translate(1706.9 144.7) scale(0.948 1)" x="-0.0" y="0" font-size="23" fill="#9b5dc5" font-weight="bold" >Z</text>
<path d="M1725.2 116.9 H1748 L1739 127.5 V138.7 H1734.3 V127.5 Z" fill="#7b7b7b" />
<path d="M1727.5 118.6 L1735.8 127.8 V137.2" fill="none" stroke="#f3f3f3" stroke-width="0.9" />
<text transform="translate(1701.5 173.4) scale(1.041 1)" x="-0.0" y="0" font-size="17.9" fill="#262626" >Sort &amp;</text>
<text transform="translate(1702 197) scale(0.9185 1)" x="-0.0" y="0" font-size="17.9" fill="#262626" >Filter</text>
<path d="M1745.1 188.9h6.8l-3.4 3.9z" fill="#6b6b6b"/>
<circle cx="1796.2" cy="123.2" r="13.5" fill="#fff" stroke="#4077bd" stroke-width="2.7"/>
<path d="M1773.5 144.5 L1786 132.5" fill="none" stroke="#4077bd" stroke-width="3.8" stroke-linecap="round"/>
<text transform="translate(1764.5 173.4) scale(1.0129 1)" x="-0.0" y="0" font-size="17.9" fill="#262626" >Find &amp;</text>
<text transform="translate(1761.7 197) scale(0.9043 1)" x="-0.0" y="0" font-size="17.9" fill="#262626" >Select</text>
<path d="M1813.0 188.9h7l-3.5 3.9z" fill="#6b6b6b"/>
<path d="M1893.5 227.5 L1900.5 220.5 L1907.5 227.5" fill="none" stroke="#555" stroke-width="1.3" />
<rect x="0" y="234" width="1920" height="65" fill="#e6e6e6" />
<rect x="7.5" y="249.5" width="151" height="34" fill="#fff" stroke="#c6c6c6" stroke-width="1"/>
<text transform="translate(14.6 273.7) scale(0.9162 1)" x="-0.0" y="0" font-size="19.5" fill="#262626" >K20</text>
<path d="M140.6 264h7.6l-3.8 4z" fill="#666"/>
<rect x="178.6" y="258" width="3.4" height="2.8" fill="#9a9a9a" />
<rect x="178.6" y="265" width="3.4" height="2.8" fill="#9a9a9a" />
<rect x="178.6" y="270.5" width="3.4" height="2.8" fill="#9a9a9a" />
<rect x="204.5" y="249.5" width="163" height="34" fill="#fff" stroke="#c6c6c6" stroke-width="1"/>
<rect x="372.5" y="249.5" width="1540" height="34" fill="#fff" stroke="#c6c6c6" stroke-width="1"/>
<path d="M223.5 258.5 L239.8 273.5 M239.8 258.5 L223.5 273.5" fill="none" stroke="#c3c3c3" stroke-width="1.6" />
<path d="M277.5 267 L283 273.8 L295.3 259" fill="none" stroke="#c8c8c8" stroke-width="2.6" />
<text x="329" y="274" font-size="21" font-family="Liberation Serif" font-style="italic" font-weight="bold" fill="#555">f</text>
<text x="337" y="274" font-size="17" font-family="Liberation Serif" font-style="italic" font-weight="bold" fill="#555">x</text>
<path d="M1894 264 L1899.5 270 L1905 264" fill="none" stroke="#bdbdbd" stroke-width="2" />
<rect x="0" y="299" width="42" height="30" fill="#e6e6e6" />
<path d="M17.2 325 L39 303.5 V325 Z" fill="#217346" />
<rect x="42" y="299" width="1848" height="28" fill="#d5f0e1" />
<rect x="142" y="299" width="1" height="28" fill="#bdc9c1"/>
<rect x="242" y="299" width="1" height="28" fill="#bdc9c1"/>
<rect x="342" y="299" width="1" height="28" fill="#bdc9c1"/>
<rect x="442" y="299" width="1" height="28" fill="#bdc9c1"/>
<rect x="542" y="299" width="1" height="28" fill="#bdc9c1"/>
<rect x="642" y="299" width="1" height="28" fill="#bdc9c1"/>
<rect x="742" y="299" width="1" height="28" fill="#bdc9c1"/>
<rect x="842" y="299" width="1" height="28" fill="#bdc9c1"/>
<rect x="942" y="299" width="1" height="28" fill="#bdc9c1"/>
<rect x="1042" y="299" width="1" height="28" fill="#bdc9c1"/>
<rect x="1142" y="299" width="1" height="28" fill="#bdc9c1"/>
<rect x="1242" y="299" width="1" height="28" fill="#bdc9c1"/>
<rect x="1342" y="299" width="1" height="28" fill="#bdc9c1"/>
<rect x="1442" y="299" width="1" height="28" fill="#bdc9c1"/>
<rect x="1542" y="299" width="1" height="28" fill="#bdc9c1"/>
<rect x="1642" y="299" width="1" height="28" fill="#bdc9c1"/>
<rect x="1742" y="299" width="1" height="28" fill="#bdc9c1"/>
<rect x="1842" y="299" width="1" height="28" fill="#bdc9c1"/>
<rect x="42" y="299" width="1" height="28" fill="#bdc9c1"/>
<text x="84.97" y="323" font-size="21" fill="#217346" >A</text>
<text x="185.02" y="323" font-size="21" fill="#217346" >B</text>
<text x="284.44" y="323" font-size="21" fill="#217346" >C</text>
<text x="384.44" y="323" font-size="21" fill="#217346" >D</text>
<text x="485.02" y="323" font-size="21" fill="#217346" >E</text>
<text x="585.6" y="323" font-size="21" fill="#217346" >F</text>
<text x="683.81" y="323" font-size="21" fill="#217346" >G</text>
<text x="784.44" y="323" font-size="21" fill="#217346" >H</text>
<text x="889.06" y="323" font-size="21" fill="#217346" >I</text>
<text x="986.75" y="323" font-size="21" fill="#217346" >J</text>
<text x="1085.02" y="323" font-size="21" fill="#217346" >K</text>
<text x="1186.17" y="323" font-size="21" fill="#217346" >L</text>
<text x="1283.23" y="323" font-size="21" fill="#217346" >M</text>
<text x="1384.44" y="323" font-size="21" fill="#217346" >N</text>
<text x="1483.81" y="323" font-size="21" fill="#217346" >O</text>
<text x="1585.02" y="323" font-size="21" fill="#217346" >P</text>
<text x="1683.81" y="323" font-size="21" fill="#217346" >Q</text>
<text x="1784.44" y="323" font-size="21" fill="#217346" >R</text>
<text x="1885.15" y="323" font-size="20.6" fill="#217346" >S</text>
<rect x="0" y="329" width="41" height="624" fill="#d5f0e1" />
<rect x="0" y="358" width="41" height="1" fill="#c8cfcb"/>
<rect x="0" y="388" width="41" height="1" fill="#c8cfcb"/>
<rect x="0" y="418" width="41" height="1" fill="#c8cfcb"/>
<rect x="0" y="448" width="41" height="1" fill="#c8cfcb"/>
<rect x="0" y="478" width="41" height="1" fill="#c8cfcb"/>
<rect x="0" y="508" width="41" height="1" fill="#c8cfcb"/>
<rect x="0" y="538" width="41" height="1" fill="#c8cfcb"/>
<rect x="0" y="568" width="41" height="1" fill="#c8cfcb"/>
<rect x="0" y="598" width="41" height="1" fill="#c8cfcb"/>
<rect x="0" y="628" width="41" height="1" fill="#c8cfcb"/>
<rect x="0" y="658" width="41" height="1" fill="#c8cfcb"/>
<rect x="0" y="688" width="41" height="1" fill="#c8cfcb"/>
<rect x="0" y="718" width="41" height="1" fill="#c8cfcb"/>
<rect x="0" y="748" width="41" height="1" fill="#c8cfcb"/>
<rect x="0" y="778" width="41" height="1" fill="#c8cfcb"/>
<rect x="0" y="808" width="41" height="1" fill="#c8cfcb"/>
<rect x="0" y="838" width="41" height="1" fill="#c8cfcb"/>
<rect x="0" y="868" width="41" height="1" fill="#c8cfcb"/>
<rect x="0" y="898" width="41" height="1" fill="#c8cfcb"/>
<rect x="0" y="928" width="41" height="1" fill="#c8cfcb"/>
<text x="15.28" y="352" font-size="20.6" fill="#217346" >1</text>
<text x="15.28" y="382" font-size="20.6" fill="#217346" >2</text>
<text x="15.28" y="412" font-size="20.6" fill="#217346" >3</text>
<text x="15.28" y="442" font-size="20.6" fill="#217346" >4</text>
<text x="15.28" y="472" font-size="20.6" fill="#217346" >5</text>
<text x="15.28" y="502" font-size="20.6" fill="#217346" >6</text>
<text x="15.28" y="532" font-size="20.6" fill="#217346" >7</text>
<text x="15.28" y="562" font-size="20.6" fill="#217346" >8</text>
<text x="15.28" y="592" font-size="20.6" fill="#217346" >9</text>
<text x="9.57" y="622" font-size="20.6" fill="#217346" >10</text>
<text x="10.29" y="652" font-size="20.6" fill="#217346" >11</text>
<text x="9.57" y="682" font-size="20.6" fill="#217346" >12</text>
<text x="9.57" y="712" font-size="20.6" fill="#217346" >13</text>
<text x="9.57" y="742" font-size="20.6" fill="#217346" >14</text>
<text x="9.57" y="772" font-size="20.6" fill="#217346" >15</text>
<text x="9.57" y="802" font-size="20.6" fill="#217346" >16</text>
<text x="9.57" y="832" font-size="20.6" fill="#217346" >17</text>
<text x="9.57" y="862" font-size="20.6" fill="#217346" >18</text>
<text x="9.57" y="892" font-size="20.6" fill="#217346" >19</text>
<text x="9.57" y="922" font-size="20.6" fill="#217346" >20</text>
<text x="9.57" y="952" font-size="20.6" fill="#217346" >21</text>
<rect x="0" y="328" width="42" height="1" fill="#c8cfcb"/>
<rect x="43" y="330" width="1847" height="623" fill="#c6c6c6" />
<rect x="142" y="330" width="1" height="623" fill="#a9a9a9"/>
<rect x="242" y="330" width="1" height="623" fill="#a9a9a9"/>
<rect x="342" y="330" width="1" height="623" fill="#a9a9a9"/>
<rect x="442" y="330" width="1" height="623" fill="#a9a9a9"/>
<rect x="542" y="330" width="1" height="623" fill="#a9a9a9"/>
<rect x="642" y="330" width="1" height="623" fill="#a9a9a9"/>
<rect x="742" y="330" width="1" height="623" fill="#a9a9a9"/>
<rect x="842" y="330" width="1" height="623" fill="#a9a9a9"/>
<rect x="942" y="330" width="1" height="623" fill="#a9a9a9"/>
<rect x="1042" y="330" width="1" height="623" fill="#a9a9a9"/>
<rect x="1142" y="330" width="1" height="623" fill="#a9a9a9"/>
<rect x="1242" y="330" width="1" height="623" fill="#a9a9a9"/>
<rect x="1342" y="330" width="1" height="623" fill="#a9a9a9"/>
<rect x="1442" y="330" width="1" height="623" fill="#a9a9a9"/>
<rect x="1542" y="330" width="1" height="623" fill="#a9a9a9"/>
<rect x="1642" y="330" width="1" height="623" fill="#a9a9a9"/>
<rect x="1742" y="330" width="1" height="623" fill="#a9a9a9"/>
<rect x="1842" y="330" width="1" height="623" fill="#a9a9a9"/>
<rect x="43" y="358" width="1847" height="1" fill="#a9a9a9"/>
<rect x="43" y="388" width="1847" height="1" fill="#a9a9a9"/>
<rect x="43" y="418" width="1847" height="1" fill="#a9a9a9"/>
<rect x="43" y="448" width="1847" height="1" fill="#a9a9a9"/>
<rect x="43" y="478" width="1847" height="1" fill="#a9a9a9"/>
<rect x="43" y="508" width="1847" height="1" fill="#a9a9a9"/>
<rect x="43" y="538" width="1847" height="1" fill="#a9a9a9"/>
<rect x="43" y="568" width="1847" height="1" fill="#a9a9a9"/>
<rect x="43" y="598" width="1847" height="1" fill="#a9a9a9"/>
<rect x="43" y="628" width="1847" height="1" fill="#a9a9a9"/>
<rect x="43" y="658" width="1847" height="1" fill="#a9a9a9"/>
<rect x="43" y="688" width="1847" height="1" fill="#a9a9a9"/>
<rect x="43" y="718" width="1847" height="1" fill="#a9a9a9"/>
<rect x="43" y="748" width="1847" height="1" fill="#a9a9a9"/>
<rect x="43" y="778" width="1847" height="1" fill="#a9a9a9"/>
<rect x="43" y="808" width="1847" height="1" fill="#a9a9a9"/>
<rect x="43" y="838" width="1847" height="1" fill="#a9a9a9"/>
<rect x="43" y="868" width="1847" height="1" fill="#a9a9a9"/>
<rect x="43" y="898" width="1847" height="1" fill="#a9a9a9"/>
<rect x="43" y="928" width="1847" height="1" fill="#a9a9a9"/>
<rect x="41" y="327" width="1849" height="2" fill="#217346" />
<rect x="41" y="327" width="2" height="626" fill="#217346" />
<rect x="43" y="329" width="1847" height="1" fill="#ffffff"/>
<rect x="43" y="329" width="1" height="29" fill="#ffffff"/>
<rect x="1889" y="330" width="1" height="623" fill="#9a9a9a"/>
<rect x="43" y="953" width="1847" height="1" fill="#9a9a9a"/>
<text x="46.4" y="352" font-size="20.13" fill="#000000" font-weight="bold" >value1</text>
<text x="146.2" y="352" font-size="20.13" fill="#000000" font-weight="bold" >value2</text>
<text x="246.6" y="352" font-size="20.14" fill="#000000" font-weight="bold" >total</text>
<text x="115.47" y="382" font-size="20.3" fill="#000000" >56</text>
<text x="215.97" y="382" font-size="20.3" fill="#000000" >98</text>
<text x="304.1" y="382" font-size="20.3" fill="#000000" >154</text>
<text x="115.47" y="412" font-size="20.3" fill="#000000" >78</text>
<text x="215.97" y="412" font-size="20.3" fill="#000000" >76</text>
<text x="304.1" y="412" font-size="20.3" fill="#000000" >154</text>
<text x="115.47" y="442" font-size="20.3" fill="#000000" >90</text>
<text x="215.97" y="442" font-size="20.3" fill="#000000" >56</text>
<text x="304.1" y="442" font-size="20.3" fill="#000000" >146</text>
<text x="115.47" y="472" font-size="20.3" fill="#000000" >43</text>
<text x="215.97" y="472" font-size="20.3" fill="#000000" >43</text>
<text x="315.47" y="472" font-size="20.3" fill="#000000" >86</text>
<text x="115.47" y="502" font-size="20.3" fill="#000000" >78</text>
<text x="215.97" y="502" font-size="20.3" fill="#000000" >97</text>
<text x="304.1" y="502" font-size="20.3" fill="#000000" >175</text>
<text x="115.47" y="532" font-size="20.3" fill="#000000" >85</text>
<text x="215.97" y="532" font-size="20.3" fill="#000000" >68</text>
<text x="304.1" y="532" font-size="20.3" fill="#000000" >153</text>
<text x="1341" y="541.2" font-size="49" font-style="italic" fill="#000" stroke="#000" stroke-width="2.2" textLength="509" lengthAdjust="spacingAndGlyphs">developerpublish·com</text>
<rect x="1890" y="299" width="30" height="655" fill="#e6e6e6" />
<rect x="1892.5" y="300.5" width="24" height="24" fill="#fff" stroke="#ababab" stroke-width="1"/>
<path d="M1899 315 L1904.5 309 L1910 315 Z" fill="#666" />
<rect x="1892.5" y="325.5" width="24" height="573" fill="#fff" stroke="#ababab" stroke-width="1"/>
<rect x="1892" y="899" width="25" height="31" fill="#dadada" />
<rect x="1892.5" y="930.5" width="24" height="24" fill="#fff" stroke="#ababab" stroke-width="1"/>
<path d="M1899 939.5 L1904.5 945.5 L1910 939.5 Z" fill="#666" />
<rect x="0" y="954" width="1920" height="33" fill="#e6e6e6" />
<rect x="0" y="987" width="1920" height="1" fill="#d2d2d2"/>
<path d="M35.6 964 L28.6 969.4 L35.6 974.8 Z" fill="#bdbdbd" />
<path d="M63.6 964 L70.6 969.4 L63.6 974.8 Z" fill="#bdbdbd" />
<rect x="118" y="953" width="89" height="30" fill="#fff" />
<rect x="118" y="953" width="1" height="30" fill="#bdbdbd"/>
<rect x="206" y="953" width="1" height="30" fill="#bdbdbd"/>
<rect x="118" y="981" width="89" height="2.5" fill="#217346" />
<text x="130.4" y="974.8" font-size="19.09" fill="#217346" font-weight="bold" >Sheet1</text>
<circle cx="256.8" cy="969.6" r="10.6" fill="none" stroke="#7a7a7a" stroke-width="1.3"/>
<path d="M256.8 964.5 V974.7 M251.7 969.6 H261.9" fill="none" stroke="#6a6a6a" stroke-width="1.6" />
<rect x="1000.5" y="957.5" width="827" height="24" fill="#fff" stroke="#c6c6c6" stroke-width="1"/>
<rect x="1828" y="957" width="38" height="25" fill="#dadada" />
<rect x="1866.5" y="957.5" width="24" height="24" fill="#fff" stroke="#ababab" stroke-width="1"/>
<path d="M1875 963.5 L1881 969 L1875 974.5 Z" fill="#666" />
<rect x="0" y="988" width="1920" height="32" fill="#f3f3f3" />
<text x="11.7" y="1009.8" font-size="14.64" fill="#444444" >Ready</text>
<text x="1105.3" y="1010" font-size="15.45" fill="#444444" >Average: 96.44444444</text>
<text x="1284.0" y="1010" font-size="15.34" fill="#444444" >Count: 21</text>
<text x="1373.0" y="1010" font-size="15.41" fill="#444444" >Sum: 1736</text>
<rect x="1475" y="988" width="60" height="32" fill="#c6c6c6" />
<rect x="1495.6" y="994.8" width="17.7" height="17.4" fill="none" stroke="#666" stroke-width="1.3" />
<rect x="1501" y="995" width="1" height="17.5" fill="#666"/>
<rect x="1495" y="1000" width="19" height="1" fill="#666"/>
<rect x="1507" y="995" width="1" height="17.5" fill="#666"/>
<rect x="1495" y="1006" width="19" height="1" fill="#666"/>
<rect x="1555.7" y="994.8" width="17.5" height="17.4" fill="none" stroke="#666" stroke-width="1.3" />
<rect x="1559.8" y="997.6" width="9.3" height="11.4" fill="none" stroke="#666" stroke-width="1.1" />
<rect x="1562.3" y="1000" width="4.400000000000091" height="1" fill="#666"/>
<rect x="1562.3" y="1003" width="4.400000000000091" height="1" fill="#666"/>
<rect x="1562.3" y="1006" width="4.400000000000091" height="1" fill="#666"/>
<path d="M1615.6 994.8 H1633.4 V1011.6 H1615.6 Z M1615.6 1004.4 H1627.4 V994.8 M1621.4 994.8 V1004.4" fill="none" stroke="#666" stroke-width="1.2" />
<rect x="1662.9" y="1003" width="11.3" height="1.3" fill="#444" />
<rect x="1683" y="1003" width="148" height="2" fill="#a8a8a8" />
<rect x="1754.2" y="995" width="7.7" height="17" fill="#737373" />
<path d="M1838 1004 H1850.6 M1844.3 997.7 V1010.3" fill="none" stroke="#444" stroke-width="1.3" />
<text x="1870.6" y="1010" font-size="14.69" fill="#444444" >104%</text>
<defs><filter id="sh" x="-10%" y="-10%" width="120%" height="120%"><feGaussianBlur stdDeviation="6"/></filter></defs>
<rect x="531" y="218" width="788" height="772" fill="rgba(0,0,0,0.25)" filter="url(#sh)"/>
<rect x="534.5" y="213.5" width="778" height="769" fill="#f0f0f0" stroke="#6f6f6f" stroke-width="1" />
<rect x="535" y="214" width="776" height="44" fill="#ffffff" />
<text transform="translate(546.5 242.8) scale(0.9508 1)" x="-0.0" y="0" font-size="17.9" fill="#000000" >Format Cells</text>
<text x="1201.8" y="243" font-size="18.74" fill="#000000" >?</text>
<path d="M1270 229 L1285 244 M1285 229 L1270 244" fill="none" stroke="#111" stroke-width="1.3" />
<rect x="547" y="271" width="458" height="1" fill="#d9d9d9"/>
<rect x="634" y="272" width="1" height="30" fill="#d9d9d9"/>
<text transform="translate(562 293.6) scale(1.0608 1)" x="-0.0" y="0" font-size="15.3" fill="#000000" >Number</text>
<rect x="736" y="272" width="1" height="30" fill="#d9d9d9"/>
<text transform="translate(650 293.6) scale(1.0587 1)" x="-0.0" y="0" font-size="15.3" fill="#000000" >Alignment</text>
<rect x="826" y="272" width="1" height="30" fill="#d9d9d9"/>
<text transform="translate(766.6 293.6) scale(0.9837 1)" x="-0.0" y="0" font-size="15.3" fill="#000000" >Font</text>
<rect x="916" y="272" width="1" height="30" fill="#d9d9d9"/>
<text transform="translate(848 293.6) scale(1.0153 1)" x="-0.0" y="0" font-size="15.3" fill="#000000" >Border</text>
<rect x="1005" y="272" width="1" height="30" fill="#d9d9d9"/>
<text transform="translate(952.6 293.6) scale(0.974 1)" x="-0.0" y="0" font-size="15.3" fill="#000000" >Fill</text>
<rect x="545.5" y="302.5" width="754" height="617" fill="#ffffff" stroke="#d9d9d9" stroke-width="1" />
<rect x="1005.5" y="269.5" width="104" height="34" fill="#ffffff" stroke="#d9d9d9" stroke-width="1" />
<rect x="1006" y="302" width="103" height="2" fill="#ffffff" />
<text transform="translate(1022.6 292.4) scale(1.0156 1)" x="-0.0" y="0" font-size="15.3" fill="#000000" >Protection</text>
<rect x="560.5" y="320.5" width="19" height="19" fill="#fff" stroke="#333" stroke-width="1" />
<rect x="560.5" y="351.5" width="19" height="19" fill="#fff" stroke="#333" stroke-width="1" />
<text transform="translate(586.4 337.6) scale(0.966 1)" x="-0.0" y="0" font-size="15.6" fill="#000000" >Locked</text>
<rect x="587" y="340" width="9" height="1" fill="#000000"/>
<text transform="translate(586.4 368.4) scale(1.007 1)" x="-0.0" y="0" font-size="15.6" fill="#000000" >Hidden</text>
<rect x="598" y="371" width="5" height="1" fill="#000000"/>
<defs><pattern id="dots" x="0" y="0" width="2" height="2" patternUnits="userSpaceOnUse"><rect x="0" y="0" width="1" height="1" fill="#000"/></pattern></defs>
<rect x="584" y="320" width="53" height="1" fill="url(#dots)" />
<rect x="584" y="342" width="53" height="1" fill="url(#dots)" />
<rect x="584" y="320" width="1" height="23" fill="url(#dots)" />
<rect x="636" y="320" width="1" height="23" fill="url(#dots)" />
<text transform="translate(560 397.2) scale(1.0051 1)" x="-0.0" y="0" font-size="15.6" fill="#000000" >Locking cells or hiding formulas has no effect until you protect the worksheet (Review tab, Protect group,</text>
<text transform="translate(560 417.8) scale(0.9882 1)" x="-0.0" y="0" font-size="15.6" fill="#000000" >Protect Sheet button).</text>
<rect x="1037" y="934.5" width="123" height="35" fill="#e5f1fb" stroke="#0078d7" stroke-width="1.2" />
<text x="1088" y="959.2" font-size="17.5" fill="#000000" textLength="21" lengthAdjust="spacingAndGlyphs" >OK</text>
<rect x="1177.5" y="934.5" width="123" height="35" fill="#e1e1e1" stroke="#adadad" stroke-width="1" />
<text x="1215" y="959.2" font-size="16.5" fill="#000000" textLength="47.5" lengthAdjust="spacingAndGlyphs" >Cancel</text>
</svg></body></html>
